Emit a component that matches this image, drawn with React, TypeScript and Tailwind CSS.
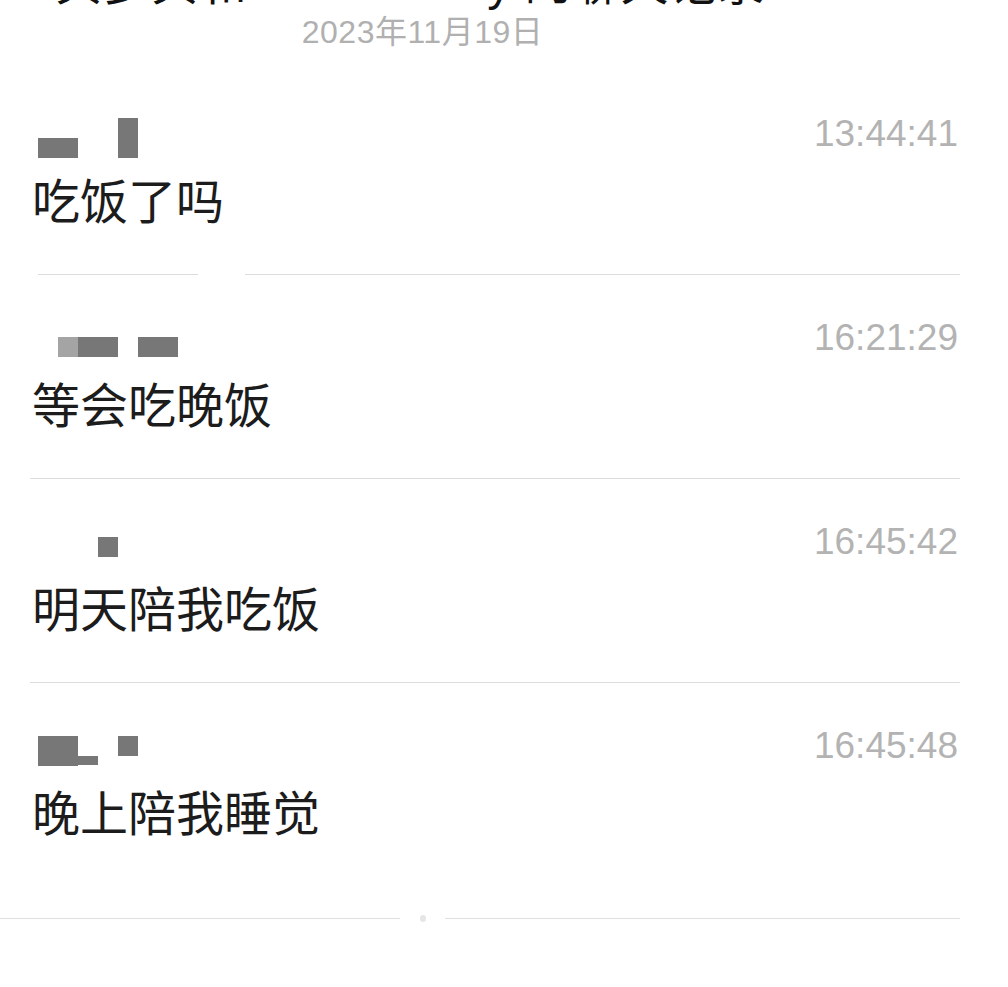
import React from "react";

type Rect = { x: number; y: number; w: number; h: number; c?: string };

const DARK = "#777777";
const LIGHT = "#a4a4a4";

function Mosaic({ rects }: { rects: Rect[] }) {
  return (
    <svg width="200" height="56" viewBox="0 0 200 56" className="block shrink-0">
      {rects.map((r, i) => (
        <rect key={i} x={r.x} y={r.y} width={r.w} height={r.h} fill={r.c ?? DARK} />
      ))}
    </svg>
  );
}

type Msg = { rects: Rect[]; time: string; text: string; sep: "split" | "full" | "none" };

const messages: Msg[] = [
  {
    rects: [
      { x: 8, y: 27, w: 40, h: 20 },
      { x: 88, y: 7, w: 20, h: 40 },
    ],
    time: "13:44:41",
    text: "吃饭了吗",
    sep: "split",
  },
  {
    rects: [
      { x: 28, y: 22, w: 20, h: 20, c: LIGHT },
      { x: 48, y: 22, w: 40, h: 20 },
      { x: 108, y: 22, w: 40, h: 20 },
    ],
    time: "16:21:29",
    text: "等会吃晚饭",
    sep: "full",
  },
  {
    rects: [{ x: 68, y: 18, w: 20, h: 20 }],
    time: "16:45:42",
    text: "明天陪我吃饭",
    sep: "full",
  },
  {
    rects: [
      { x: 8, y: 13, w: 40, h: 30 },
      { x: 48, y: 33, w: 20, h: 9 },
      { x: 88, y: 13, w: 20, h: 20 },
    ],
    time: "16:45:48",
    text: "晚上陪我睡觉",
    sep: "none",
  },
];

function Separator({ kind }: { kind: Msg["sep"] }) {
  if (kind === "none") return null;
  if (kind === "split")
    return (
      <div className="flex h-px pl-[8px]">
        <div className="w-[160px] bg-[#dcdcdc]" />
        <div className="ml-[47px] flex-1 bg-[#dcdcdc]" />
      </div>
    );
  return <div className="h-px bg-[#dcdcdc]" />;
}

export default function App() {
  return (
    <div className="w-[1008px] h-[987px] overflow-hidden bg-white">
      {/* header */}
      <div className="w-[845px]">
        <div
          className="-mt-[40px] h-[48px] pl-[55px] whitespace-nowrap text-[48px] leading-[48px] text-[#111111]"
          style={{ fontFamily: '"Liberation Sans", "Noto Sans CJK SC", sans-serif' }}
        >
          贝多贝和 Alan Ashley 的聊天记录
        </div>
        <div
          className="mt-[9px] h-[31px] text-center text-[32px] leading-[31px] tracking-[0.5px] text-[#b0b0b0]"
          style={{ fontFamily: '"Liberation Sans", "Noto Sans CJK SC", sans-serif' }}
        >
          2023年11月19日
        </div>
      </div>

      {/* messages */}
      <div className="ml-[30px] mt-[23px] w-[930px]">
        {messages.map((m, i) => (
          <div key={i}>
            <div className="pt-[40px] pb-[46px]">
              <div className="flex h-[61px] items-start justify-between">
                <Mosaic rects={m.rects} />
                <div
                  className="mt-[4px] pr-[2px] text-[37px] leading-[37px] text-[#b3b3b3]"
                  style={{ fontFamily: '"Liberation Sans", sans-serif' }}
                >
                  {m.time}
                </div>
              </div>
              <div
                className="h-[56px] pl-[2px] text-[48px] leading-[52px] text-[#1c1c1c]"
                style={{ fontFamily: '"Noto Sans CJK SC", sans-serif' }}
              >
                {m.text}
              </div>
            </div>
            <Separator kind={m.sep} />
          </div>
        ))}
      </div>

      {/* bottom divider */}
      <div className="mt-[29px] flex w-[960px] items-center">
        <div className="h-px w-[400px] bg-[#e0e0e0]" />
        <div className="ml-[20px] h-[7px] w-[6px] rounded-full bg-[#e6e6e6]" />
        <div className="ml-[19px] h-px flex-1 bg-[#e0e0e0]" />
      </div>
    </div>
  );
}
